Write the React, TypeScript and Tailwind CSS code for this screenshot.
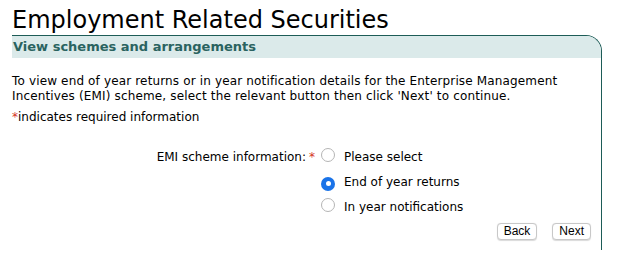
import React from "react";

function Radio({ checked }: { checked?: boolean }) {
  return checked ? (
    <span className="inline-flex h-[14px] w-[14px] items-center justify-center rounded-full bg-[#1a73e8]">
      <span className="h-[5px] w-[5px] rounded-full bg-white" />
    </span>
  ) : (
    <span className="inline-block h-[14px] w-[14px] rounded-full border border-[#b5b5b5] bg-white" />
  );
}

export default function App() {
  const v = { fontFamily: '"DejaVu Sans", Verdana, sans-serif' };
  const opts = [
    { label: "Please select", checked: false },
    { label: "End of year returns", checked: true },
    { label: "In year notifications", checked: false },
  ];
  return (
    <div className="h-[269px] w-[617px] bg-white text-black" style={v}>
      <div className="pl-[12px] pt-[5px]">
        <h1 className="text-[24px] leading-[30px] font-normal">Employment Related Securities</h1>
        <div className="w-[590px] h-[215px] border-t border-r border-[#1d5c57] rounded-tr-[16px]">
          <div className="h-[22px] bg-[#dbeaea] rounded-tr-[15px] pl-[1px] pt-[2px] text-[13px] font-bold text-[#2a6360] leading-[18px]">
            View schemes and arrangements
          </div>
          <p className="mt-[16px] text-[12px] leading-[15px] pr-[20px] tracking-[0.15px]">
            To view end of year returns or in year notification details for the Enterprise Management Incentives (EMI) scheme, select the relevant button then click 'Next' to continue.
          </p>
          <p className="mt-[6px] text-[12px] leading-[15px]">
            <span className="text-[#d4351c]">*</span>indicates required information
          </p>
          <div className="mt-[22px] flex text-[12px]">
            <div className="w-[306px] flex justify-end items-start h-[20px]">
              <span className="leading-[20px] mr-[3px]">EMI scheme information:</span>
              <span className="text-[#d4351c] leading-[20px] mr-[3px]">*</span>
            </div>
            <div className="flex flex-col gap-[5px]">
              {opts.map((o) => (
                <div key={o.label} className="flex items-center h-[20px]">
                  <span className="ml-[3px]"><Radio checked={o.checked} /></span>
                  <span className="ml-[9px] leading-[20px]">{o.label}</span>
                </div>
              ))}
            </div>
          </div>
          <div className="mt-[6px] flex justify-end gap-[15px] pr-[10px]" style={{ fontFamily: '"Liberation Sans", Arial, sans-serif' }}>
            <button className="h-[17px] px-[6px] rounded-[4px] border border-[#c8c8c8] bg-white text-[12px] leading-[15px] shadow-[0_0.5px_1px_rgba(0,0,0,0.15)]">Back</button>
            <button className="h-[17px] px-[6px] rounded-[4px] border border-[#c8c8c8] bg-white text-[12px] leading-[15px] shadow-[0_0.5px_1px_rgba(0,0,0,0.15)]">Next</button>
          </div>
        </div>
      </div>
    </div>
  );
}
